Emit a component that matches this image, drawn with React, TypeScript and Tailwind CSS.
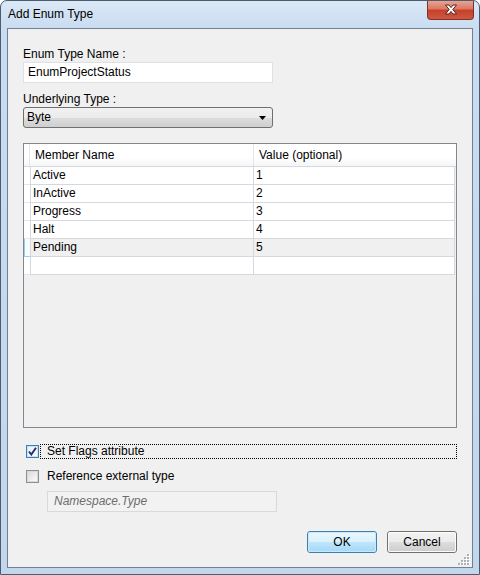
import { ReactNode } from 'react'

type Member = {
  name: string
  value: string
}

const members: Member[] = [
  { name: 'Active', value: '1' },
  { name: 'InActive', value: '2' },
  { name: 'Progress', value: '3' },
  { name: 'Halt', value: '4' },
  { name: 'Pending', value: '5' },
]

const font = { fontFamily: '"Liberation Sans", Arial, sans-serif' }

const CloseGlyph = () => (
  <svg width="14" height="11" viewBox="0 0 14 11">
    <path
      d="M1.5 1 H5 L7 3.6 L9 1 H12.5 L8.8 5.5 L12.5 10 H9 L7 7.4 L5 10 H1.5 L5.2 5.5 Z"
      fill="#ffffff"
      stroke="#4a2620"
      strokeWidth="1"
      strokeLinejoin="round"
    />
  </svg>
)

const CheckBox = ({ checked }: { checked?: boolean }) => (
  <div
    className={`flex h-[13px] w-[13px] shrink-0 items-center justify-center border ${
      checked ? 'border-[#3c7fb1]' : 'border-[#8e8f8f]'
    } bg-white`}
  >
    <div
      className={`flex h-[11px] w-[11px] items-center justify-center border ${
        checked ? 'border-[#c6e4f7] bg-gradient-to-br from-[#e7f4fc] to-[#f8fcff]' : 'border-[#d8d8d8] bg-gradient-to-br from-[#dcdcdc] to-[#fbfbfb]'
      }`}
    >
      {checked && (
        <svg width="9" height="9" viewBox="0 0 9 9">
          <path d="M1 4.5 L3.3 7.5 L8 0.8" fill="none" stroke="#2e2b72" strokeWidth="2" />
        </svg>
      )}
    </div>
  </div>
)

const WinButton = ({ children, primary }: { children: ReactNode; primary?: boolean }) => (
  <div
    className={`flex h-[22px] w-[70px] items-center justify-center rounded-[3px] border ${
      primary ? 'border-[#3c7fb1]' : 'border-[#707070]'
    }`}
  >
    <div
      className={`flex h-full w-full items-center justify-center rounded-[2px] border ${
        primary
          ? 'border-[#c8eaf8] bg-[linear-gradient(#eaf6fd_0%,#d9f0fc_50%,#bee6fd_51%,#a7d9f5_100%)]'
          : 'border-[#fbfbfb] bg-[linear-gradient(#f2f2f2_0%,#ebebeb_50%,#dddddd_51%,#cfcfcf_100%)]'
      } text-[12px] leading-[15px] text-black`}
    >
      {children}
    </div>
  </div>
)

export default function App() {
  return (
    <div
      style={font}
      className="relative flex h-[575px] w-[480px] flex-col overflow-hidden rounded-t-[7px] border border-[#4d5b6e] bg-[linear-gradient(180deg,#dbe8f6_0px,#c9dcf1_28px,#c2d6ec_100%)]"
    >
      {/* ================= TITLE BAR ================= */}
      <div className="flex h-[27px] shrink-0 items-start justify-between pl-[7px] pr-[5px]">
        <div className="mt-[6px] text-[12px] leading-[15px] text-black">Add Enum Type</div>
        <div className="-mt-px flex h-[20px] w-[47px] items-center justify-center rounded-b-[4px] border border-t-0 border-[#7b3328] bg-[linear-gradient(#eaa897_0%,#dd7966_45%,#c6412c_55%,#d0573f_100%)]">
          <CloseGlyph />
        </div>
      </div>

      {/* ================= CLIENT ================= */}
      <div className="relative mx-[6px] mb-[6px] flex flex-1 flex-col border border-[#72808f] bg-[#f0f0f0] px-[15px] pt-[18px] text-[12px] leading-[15px] text-black">
        <div>Enum Type Name :</div>
        <div className="flex h-[21px] w-[250px] items-center border border-[#dde1e6] bg-white pl-[4px]">
          EnumProjectStatus
        </div>

        <div className="mt-[9px]">Underlying Type :</div>
        <div className="flex h-[21px] w-[250px] items-center justify-between rounded-[3px] border border-[#707070] bg-[linear-gradient(#f2f2f2_0%,#ebebeb_50%,#dddddd_51%,#cfcfcf_100%)] pl-[3px] pr-[5px]">
          <span>Byte</span>
          <svg width="8" height="4" viewBox="0 0 8 4">
            <path d="M0 0 H7 L3.5 4 Z" fill="#000" />
          </svg>
        </div>

        {/* ================= MEMBERS GRID ================= */}
        <div className="mt-[15px] flex h-[285px] flex-col border border-[#828790] bg-[#f0f0f0]">
          <div className="flex h-[23px] shrink-0 border-b border-[#d5d8de] bg-[linear-gradient(#ffffff_0%,#ffffff_60%,#f5f6f7_100%)]">
            <div className="w-[6px] shrink-0 border-r border-[#e2e4e7]" />
            <div className="flex w-[224px] items-center border-r border-[#e2e4e7] pl-[5px]">Member Name</div>
            <div className="flex flex-1 items-center pl-[5px]">Value (optional)</div>
          </div>

          {[...members, { name: '', value: '' }].map((m, i) => {
            const selected = m.name === 'Pending'
            return (
              <div key={i} className="flex h-[18px] shrink-0 pr-px">
                <div
                  className={`w-[6px] shrink-0 border-b ${
                    selected ? 'border-l border-[#9fcbeb] bg-[#f7fbfe]' : 'border-[#e4e6ea] bg-white'
                  }`}
                />
                <div
                  className={`flex w-[224px] items-center border-x border-b border-[#d5d8de] pl-[2px] ${
                    selected ? 'bg-[#f0f0f0]' : 'bg-white'
                  }`}
                >
                  {m.name}
                </div>
                <div
                  className={`flex flex-1 items-center border-r border-b border-[#d5d8de] pl-[2px] ${
                    selected ? 'bg-[#f0f0f0]' : 'bg-white'
                  }`}
                >
                  {m.value}
                </div>
              </div>
            )
          })}
        </div>

        {/* ================= OPTIONS ================= */}
        <div className="mt-[16px] flex h-[15px] items-center pl-[3px]">
          <CheckBox checked />
          <div className="ml-px flex h-[15px] flex-1 items-center border border-dotted border-black pl-[6px]">
            Set Flags attribute
          </div>
        </div>

        <div className="mt-[10px] flex h-[15px] items-center pl-[3px]">
          <CheckBox />
          <div className="ml-[8px]">Reference external type</div>
        </div>

        <div className="ml-[24px] mt-[7px] flex h-[21px] w-[230px] items-center border border-[#d9d9d9] bg-[#f2f2f2] pl-[6px] italic text-[#6d6d6d]">
          Namespace.Type
        </div>

        {/* ================= BUTTONS ================= */}
        <div className="mt-[19px] flex justify-end gap-[10px]">
          <WinButton primary>OK</WinButton>
          <WinButton>Cancel</WinButton>
        </div>

        {/* resize grip */}
        <svg className="absolute bottom-[2px] right-[2px]" width="12" height="12" viewBox="0 0 12 12">
          {[
            [9, 1],
            [6, 4], [9, 4],
            [3, 7], [6, 7], [9, 7],
            [0, 10], [3, 10], [6, 10], [9, 10],
          ].map(([x, y], i) => (
            <g key={i}>
              <rect x={x + 1} y={y + 1} width="2" height="2" fill="#ffffff" />
              <rect x={x} y={y} width="2" height="2" fill="#a7b3c0" />
            </g>
          ))}
        </svg>
      </div>
    </div>
  )
}
